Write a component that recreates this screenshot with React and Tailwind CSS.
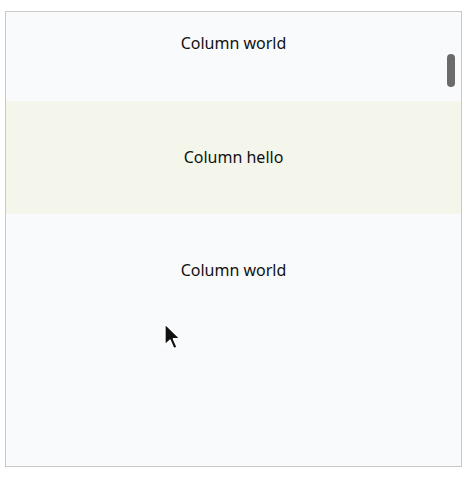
const rows = ['Column world', 'Column hello', 'Column world'];
const pads = ['pb-[3px]', 'bg-[#f4f6ec] pb-[2px]', 'pb-[2px]'];

const Cursor = () => (
  <svg width="21" height="30" viewBox="0 0 18 26" className="absolute left-[163px] top-[322px]">
    <path d="M1.5 1.5 L1.5 20 L6 15.8 L9.2 23.2 L12.2 21.9 L9 14.6 L15 14.6 Z" fill="#111" stroke="#fff" strokeWidth="1.4" strokeLinejoin="round" />
  </svg>
);

export default function App() {
  return (
    <div className="relative w-[474px] h-[481px] bg-white" style={{ fontFamily: '"Noto Sans", "Open Sans", sans-serif' }}>
      <div className="absolute left-[5px] top-[11px] w-[457px] h-[456px] border border-[#c9c9c9] bg-[#f9fafb] overflow-hidden">
        <div className="-mt-[24px]">
          {rows.map((label, i) => (
            <div
              key={i}
              className={`h-[113px] flex items-center justify-center text-[16px] text-[#111] ${pads[i]}`}
            >
              {label}
            </div>
          ))}
        </div>
        <div className="absolute right-[6px] top-[42px] w-[8px] h-[33px] rounded-full bg-[#6b6b6b]" />
      </div>
      <Cursor />
    </div>
  );
}
